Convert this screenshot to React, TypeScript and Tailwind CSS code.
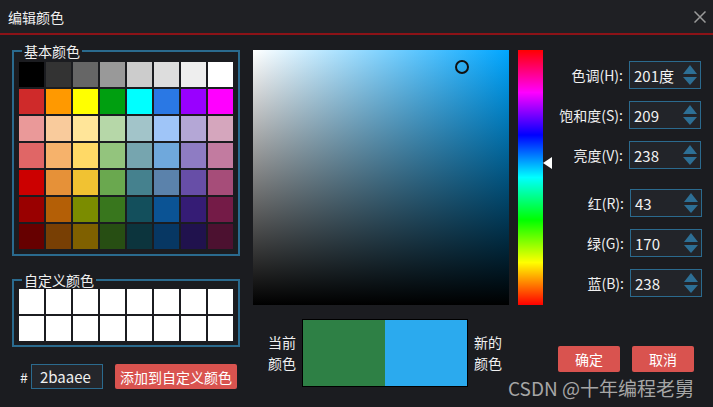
import React from "react";

const basic: string[][] = [
  ["#000000", "#333333", "#666666", "#999999", "#cccccc", "#dddddd", "#eeeeee", "#ffffff"],
  ["#cf2a2a", "#ff9900", "#ffff00", "#009f10", "#00ffff", "#2a78e4", "#9900ff", "#ff00ff"],
  ["#ea9999", "#f9cb9c", "#ffe599", "#b6d7a8", "#a2c4c9", "#9fc5f8", "#b4a7d6", "#d5a6bd"],
  ["#e06666", "#f6b26b", "#ffd966", "#93c47d", "#76a5af", "#6fa8dc", "#8e7cc3", "#c27ba0"],
  ["#cc0000", "#e69138", "#f1c232", "#6aa84f", "#45818e", "#5b82ab", "#674ea7", "#a64d79"],
  ["#990000", "#b45f06", "#7b8c00", "#38761d", "#134f5c", "#0b5394", "#351c75", "#741b47"],
  ["#660000", "#783f04", "#7f6000", "#274e13", "#0c343d", "#073763", "#20124d", "#4c1130"],
];

function Spin({ label, value, shift }: { label: string; value: string; shift?: boolean }) {
  return (
    <div className={"flex items-center justify-end h-[28px] " + (shift ? "-mr-[1px]" : "")}>
      <span className="text-[14px] leading-none mr-[6px] text-[#f0f0f0]">{label}</span>
      <div className="w-[72px] h-[28px] border border-[#2b6a8e] bg-[#222429] flex items-center justify-between pl-[4px] pr-[3px]">
        <span className="text-[15px] leading-none text-[#f2f2f2]">{value}</span>
        <svg width="14" height="21" viewBox="0 0 14 21" className="self-start mt-[3px]">
          <path d="M7 0 L14 9 L0 9 Z" fill="#2d6f95" />
          <path d="M0 12 L14 12 L7 20 Z" fill="#2d6f95" />
        </svg>
      </div>
    </div>
  );
}

function Cell({ c }: { c: string }) {
  return <div className="w-[25px] h-[25px]" style={{ backgroundColor: c }} />;
}

export default function App() {
  return (
    <div className="relative w-[713px] h-[407px] bg-[#1b1c20] text-[#f0f0f0] font-['Noto_Sans_CJK_SC',sans-serif] overflow-hidden">
      <div className="h-[33px] flex items-center justify-between bg-[#1f2024] pl-[8px] pr-[7px]">
        <span className="text-[14px] leading-none">编辑颜色</span>
        <svg width="12" height="12" viewBox="0 0 12 12" className="mt-[1px]">
          <path d="M0.5 0.5L11.5 11.5M11.5 0.5L0.5 11.5" stroke="#9a9a9a" strokeWidth="1.5" />
        </svg>
      </div>
      <div className="h-[2px] bg-[#8c1217]" />
      <div className="flex h-[372px]">
        {/* left column */}
        <div className="w-[240px] pl-[12px] pt-[15px] flex flex-col">
          <div className="relative w-[228px] border-2 border-[#2a6a8e] pt-[10px] px-[5px] pb-[5px]">
            <span className="absolute left-[8px] -top-[9px] px-[2px] bg-[#1b1c20] text-[14px] leading-[16px]">基本颜色</span>
            <div className="grid grid-cols-8 gap-[2px]">
              {basic.flat().map((c, i) => (
                <Cell key={i} c={c} />
              ))}
            </div>
          </div>
          <div className="relative w-[228px] mt-[23px] border-2 border-[#2a6a8e] pt-[8px] px-[5px] pb-[4px]">
            <span className="absolute left-[8px] -top-[9px] px-[2px] bg-[#1b1c20] text-[14px] leading-[16px]">自定义颜色</span>
            <div className="grid grid-cols-8 gap-[2px]">
              {Array.from({ length: 16 }).map((_, i) => (
                <Cell key={i} c="#ffffff" />
              ))}
            </div>
          </div>
          <div className="mt-[17px] flex items-center h-[25px]">
            <span className="ml-[8px] w-[11px] text-[14px] leading-none">#</span>
            <div className="w-[72px] h-[25px] border border-[#2b6a8e] bg-[#24262b] pl-[8px] flex items-center text-[15px] leading-none">
              2baaee
            </div>
            <div className="ml-[12px] w-[122px] h-[25px] bg-[#d9534f] rounded-[2px] flex items-center justify-center text-[14px] leading-none text-white">
              添加到自定义颜色
            </div>
          </div>
        </div>

        {/* right section */}
        <div className="flex-1 flex flex-col pt-[15px]">
          <div className="flex">
            <div className="relative ml-[13px] w-[256px] h-[255px] bg-[linear-gradient(to_top,#000,transparent),linear-gradient(to_right,#fff,#00a6ff)]">
              <div className="absolute left-[202px] top-[10px] w-[14px] h-[14px] rounded-full border-2 border-[#111]" />
            </div>
            <div className="relative ml-[9px] w-[25px] h-[255px] bg-[linear-gradient(to_bottom,#ff0000,#ff00ff,#0000ff,#00ffff,#00ff00,#ffff00,#ff0000)]">
              <svg width="9" height="12" viewBox="0 0 9 12" className="absolute left-[25px] top-[107px]">
                <path d="M0 6 L9 0 L9 12 Z" fill="#ffffff" />
              </svg>
            </div>
            <div className="w-[158px] pt-[11px] flex flex-col">
              <div className="flex flex-col gap-[12px]">
                <Spin label="色调(H):" value="201度" />
                <Spin label="饱和度(S):" value="209" />
                <Spin label="亮度(V):" value="238" />
              </div>
              <div className="flex flex-col gap-[12px] mt-[20px]">
                <Spin label="红(R):" value="43" shift />
                <Spin label="绿(G):" value="170" shift />
                <Spin label="蓝(B):" value="238" shift />
              </div>
            </div>
          </div>
          <div className="mt-[14px] flex">
            <div className="flex items-center">
              <div className="ml-[28px] w-[28px] text-[14px] leading-[21px]">
                当前
                <br />
                颜色
              </div>
              <div className="ml-[6px] w-[166px] h-[68px] border border-black flex">
                <div className="flex-1 bg-[#2e8045]" />
                <div className="flex-1 bg-[#2baaee]" />
              </div>
              <div className="ml-[6px] w-[28px] text-[14px] leading-[21px]">
                新的
                <br />
                颜色
              </div>
            </div>
            <div className="ml-[56px] mt-[27px] flex gap-[12px] self-start">
              <div className="w-[62px] h-[26px] bg-[#d9534f] rounded-[2px] flex items-center justify-center text-[14px] leading-none text-white">
                确定
              </div>
              <div className="w-[62px] h-[26px] bg-[#d9534f] rounded-[2px] flex items-center justify-center text-[14px] leading-none text-white">
                取消
              </div>
            </div>
          </div>
        </div>
      </div>
      <div className="absolute left-[508px] top-[376px] text-[19px] leading-[24px] text-[#a6a6a6] whitespace-nowrap">
        CSDN @十年编程老舅
      </div>
    </div>
  );
}
